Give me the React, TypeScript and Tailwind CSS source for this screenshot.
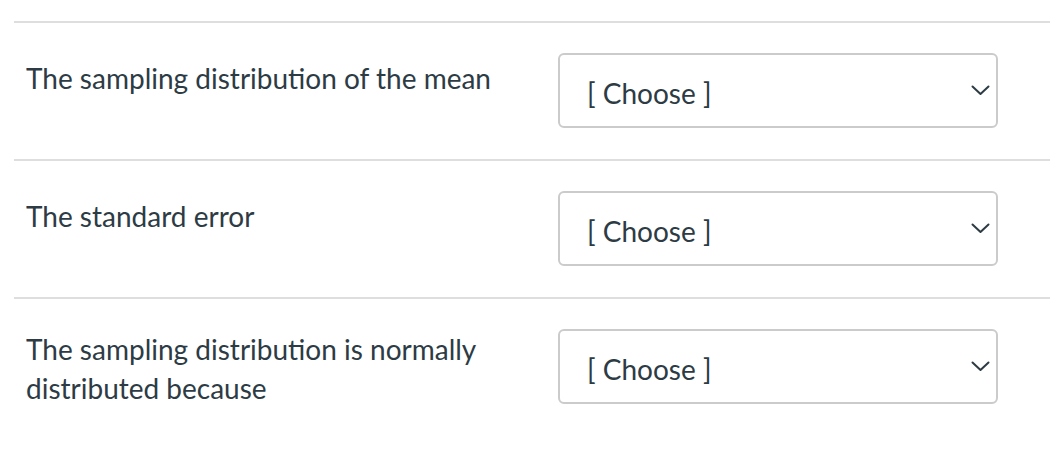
const rows = [
  { label: "The sampling distribution of the mean", offset: "mt-[6px]" },
  { label: "The standard error", offset: "mt-[6px]" },
  { label: "The sampling distribution is normally distributed because", offset: "mt-[1px]" },
];

function Chevron() {
  return (
    <svg width="19" height="11" viewBox="0 0 19 11" fill="none" className="shrink-0">
      <path d="M1.5 1.5 L9.5 9 L17.5 1.5" stroke="#2d3b45" strokeWidth="2" strokeLinecap="round" strokeLinejoin="round" />
    </svg>
  );
}

function ChooseSelect() {
  return (
    <div className="w-[440px] h-[75px] shrink-0 flex items-center justify-between border-2 border-[#cbcbcb] rounded-[6px] bg-white pl-[27px] pr-[6px]">
      <span className="pt-[6px] text-[28px] leading-[39px] text-[#2d3b45]">[ Choose ]</span>
      <Chevron />
    </div>
  );
}

export default function App() {
  return (
    <div className="w-[1050px] h-[452px] bg-white pt-[21px] pl-[14px] font-['Lato','Liberation_Sans',sans-serif] text-[#2d3b45] overflow-hidden">
      {rows.map((row) => (
        <div key={row.label} className="flex items-start border-t-2 border-[#dedede] pt-[30px] pb-[31px] pl-[12px]">
          <div className={`w-[532px] shrink-0 pr-[40px] text-[28px] leading-[39px] ${row.offset}`}>
            {row.label}
          </div>
          <ChooseSelect />
        </div>
      ))}
    </div>
  );
}
